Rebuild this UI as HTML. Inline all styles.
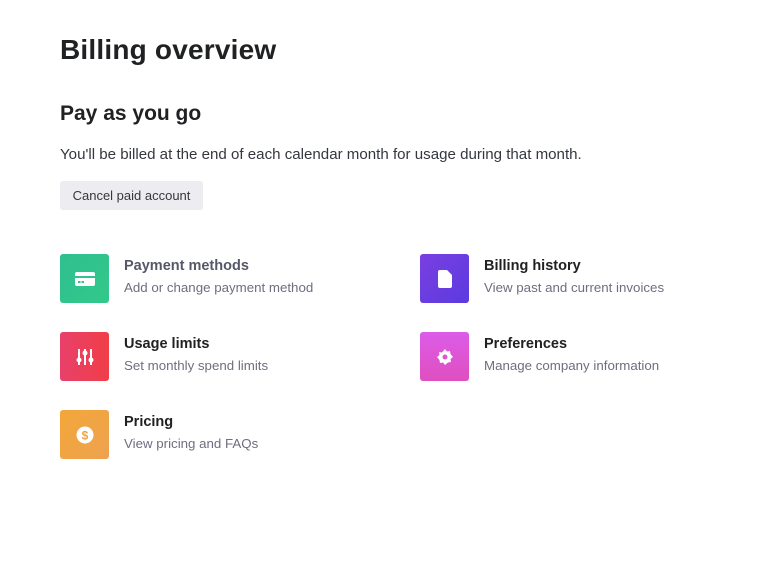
<!DOCTYPE html>
<html><head><style>
body{margin:0;background:#fff;font-family:"Liberation Sans",sans-serif;color:#202123;width:768px;height:570px;overflow:hidden;position:relative}
.a{position:absolute}
h1{position:absolute;left:60px;top:34px;margin:0;font-size:28px;font-weight:bold;letter-spacing:0.2px}
h2{position:absolute;left:60px;top:102px;margin:0;font-size:21px;font-weight:bold}
.p{left:60px;top:146px;font-size:15.1px;color:#353740}
.btn{left:60px;top:181px;width:143px;height:29px;background:#ececf1;border-radius:3px;font-size:13px;line-height:29px;text-align:center;color:#353740}
.ic{width:49px;height:49px;border-radius:3px;display:flex;align-items:center;justify-content:center}
.t{font-size:14.5px;font-weight:bold}
.s{font-size:13.3px;color:#6e6e80;margin-top:6px}
</style></head><body>
<h1>Billing overview</h1>
<h2>Pay as you go</h2>
<div class="a p">You'll be billed at the end of each calendar month for usage during that month.</div>
<div class="a btn">Cancel paid account</div>

<div class="a ic" style="left:60px;top:254px;background:linear-gradient(135deg,#2fbf8f,#32c98a)"><svg width="20" height="16"><rect x="0" y="1" width="20" height="14" rx="2" fill="#fff"/><rect x="0" y="5" width="20" height="2" fill="#32c48d"/><rect x="3" y="10" width="2.5" height="2" fill="#32c48d"/><rect x="6.5" y="10" width="2.5" height="2" fill="#32c48d"/></svg></div>
<div class="a" style="left:124px;top:258px"><div class="t" style="color:#565869">Payment methods</div><div class="s">Add or change payment method</div></div>

<div class="a ic" style="left:420px;top:254px;background:linear-gradient(135deg,#7a3fe0,#5b3be0)"><svg width="14" height="18"><path d="M2 0h7l5 5v11a2 2 0 0 1-2 2H2a2 2 0 0 1-2-2V2a2 2 0 0 1 2-2z" fill="#fff"/></svg></div>
<div class="a" style="left:484px;top:258px"><div class="t">Billing history</div><div class="s">View past and current invoices</div></div>

<div class="a ic" style="left:60px;top:332px;background:linear-gradient(90deg,#e8406a,#f03e48)"><svg width="18" height="18" stroke="#fff" stroke-width="2" fill="#fff"><line x1="3" y1="1" x2="3" y2="17"/><line x1="9" y1="1" x2="9" y2="17"/><line x1="15" y1="1" x2="15" y2="17"/><circle cx="3" cy="12" r="1.5"/><circle cx="9" cy="5" r="1.5"/><circle cx="15" cy="12" r="1.5"/></svg></div>
<div class="a" style="left:124px;top:336px"><div class="t">Usage limits</div><div class="s">Set monthly spend limits</div></div>

<div class="a ic" style="left:420px;top:332px;background:linear-gradient(180deg,#dc5ce8,#df4fbf)"><svg width="18" height="18" viewBox="0 0 18 18"><path d="M9 1l2 2.5 3-.5.5 3L17 9l-2.5 2 .5 3-3 .5L9 17l-2-2.5-3 .5-.5-3L1 9l2.5-2L3 4l3 .5z" fill="#fff"/><circle cx="9" cy="9" r="2.5" fill="#de56d4"/></svg></div>
<div class="a" style="left:484px;top:336px"><div class="t">Preferences</div><div class="s">Manage company information</div></div>

<div class="a ic" style="left:60px;top:410px;background:linear-gradient(135deg,#f2a73a,#eea24f)"><svg width="18" height="18"><circle cx="9" cy="9" r="8.5" fill="#fff"/><text x="9" y="13.5" font-size="12" font-weight="bold" text-anchor="middle" fill="#f0a442" font-family="Liberation Sans">$</text></svg></div>
<div class="a" style="left:124px;top:414px"><div class="t">Pricing</div><div class="s">View pricing and FAQs</div></div>
</body></html>
